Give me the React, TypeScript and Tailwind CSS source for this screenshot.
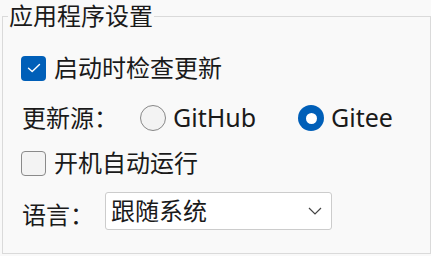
import { useState } from 'react';

const font = { fontFamily: '"Noto Sans", "Noto Sans CJK SC", sans-serif' };

function CheckBox({ checked, onClick }: { checked: boolean; onClick: () => void }) {
  return (
    <button
      onClick={onClick}
      className={`flex h-[25px] w-[25px] shrink-0 items-center justify-center rounded-[4px] ${
        checked ? 'bg-[#005fb8]' : 'border border-[#8a8a8a] bg-[#f3f3f3]'
      }`}
    >
      {checked && (
        <svg width="14" height="10" viewBox="0 0 14 10" fill="none">
          <path d="M1.5 5.2 L5.2 8.6 L12.5 1.5" stroke="#fff" strokeWidth="1.4" strokeLinecap="round" strokeLinejoin="round" />
        </svg>
      )}
    </button>
  );
}

function Radio({ checked, onClick }: { checked: boolean; onClick: () => void }) {
  return (
    <button
      onClick={onClick}
      className={`flex h-[26px] w-[26px] shrink-0 items-center justify-center rounded-full ${
        checked ? 'bg-[#005fb8]' : 'border border-[#878787] bg-[#f3f3f3]'
      }`}
    >
      {checked && <span className="h-[11px] w-[11px] rounded-full bg-white" />}
    </button>
  );
}

export default function App() {
  const [checkUpdate, setCheckUpdate] = useState(true);
  const [source, setSource] = useState<'github' | 'gitee'>('gitee');
  const [autoStart, setAutoStart] = useState(false);

  return (
    <div className="h-[256px] w-[431px] bg-[#f9f9f9] text-[24px] text-[#1a1a1a]" style={font}>
      <fieldset className="ml-[2px] h-[254px] w-[429px] border border-[#dadada] pl-[5px]">
        <legend className="px-[1px] leading-[32px]">应用程序设置</legend>

        <div className="flex flex-col pl-[13px]">
          {/* 启动时检查更新 */}
          <div className="mt-[19px] flex h-[34px] items-center gap-[8px]">
            <CheckBox checked={checkUpdate} onClick={() => setCheckUpdate(!checkUpdate)} />
            <span>启动时检查更新</span>
          </div>

          {/* 更新源 */}
          <div className="mt-[16px] flex h-[34px] items-center">
            <span className="w-[119px] pl-[1px]">更新源：</span>
            <div className="flex items-center gap-[7px]">
              <Radio checked={source === 'github'} onClick={() => setSource('github')} />
              <span className="text-[25px]">GitHub</span>
            </div>
            <div className="ml-[42px] flex items-center gap-[7px]">
              <Radio checked={source === 'gitee'} onClick={() => setSource('gitee')} />
              <span className="text-[25px]">Gitee</span>
            </div>
          </div>

          {/* 开机自动运行 */}
          <div className="mt-[11px] flex h-[34px] items-center gap-[8px]">
            <CheckBox checked={autoStart} onClick={() => setAutoStart(!autoStart)} />
            <span>开机自动运行</span>
          </div>

          {/* 语言 */}
          <div className="mt-[9px] flex items-center">
            <span className="w-[84px] pl-[1px] pt-[8px]">语言：</span>
            <div className="flex h-[38px] w-[227px] items-center justify-between rounded-[3px] border border-[#cccccc] bg-white pl-[5px] pr-[9px]">
              <span>跟随系统</span>
              <svg width="14" height="8" viewBox="0 0 14 8" fill="none">
                <path d="M1 1 L7 7 L13 1" stroke="#444" strokeWidth="1.2" />
              </svg>
            </div>
          </div>
        </div>
      </fieldset>
    </div>
  );
}
